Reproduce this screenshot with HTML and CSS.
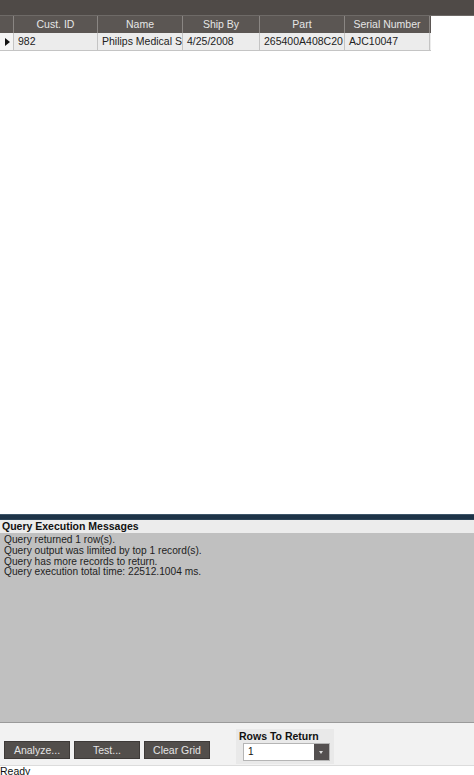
FILE: index.html
```html
<!DOCTYPE html>
<html>
<head>
<meta charset="utf-8">
<link rel="stylesheet" href="styles.css">
</head>
<body>
<div class="app">
  <div class="grid-area">
    <div class="topbar"></div>
    <div class="grid">
      <div class="row head">
        <div class="cell sel"></div>
        <div class="cell c1">Cust. ID</div>
        <div class="cell c2">Name</div>
        <div class="cell c3">Ship By</div>
        <div class="cell c4">Part</div>
        <div class="cell c5">Serial Number</div>
      </div>
      <div class="row data">
        <div class="cell sel"><span class="arrow"></span></div>
        <div class="cell c1">982</div>
        <div class="cell c2">Philips Medical S</div>
        <div class="cell c3">4/25/2008</div>
        <div class="cell c4">265400A408C20</div>
        <div class="cell c5">AJC10047</div>
      </div>
    </div>
  </div>
  <div class="splitter"></div>
  <div class="messages">
    <div class="msg-title">Query Execution Messages</div>
    <div class="msg-body">
      <div>Query returned 1 row(s).</div>
      <div>Query output was limited by top 1 record(s).</div>
      <div>Query has more records to return.</div>
      <div>Query execution total time: 22512.1004 ms.</div>
    </div>
  </div>
  <div class="toolbar">
    <div class="buttons">
      <button class="btn">Analyze...</button>
      <button class="btn">Test...</button>
      <button class="btn">Clear Grid</button>
    </div>
    <div class="rows-group">
      <div class="rows-label">Rows To Return</div>
      <div class="select">
        <span class="select-value">1</span>
        <span class="select-arrow"></span>
      </div>
    </div>
  </div>
  <div class="status">Ready</div>
</div>
</body>
</html>
```
FILE: styles.css
```css
* { box-sizing: border-box; }
html, body { margin: 0; padding: 0; background: #ffffff; }
body {
  font-family: "Liberation Sans", Arial, sans-serif;
  font-size: 10px;
  color: #1a1a1a;
  width: 474px;
  height: 775px;
  overflow: hidden;
}
.app { display: flex; flex-direction: column; height: 775px; }
.grid-area { height: 515px; background: #ffffff; }
.topbar { height: 16px; background: #4f4a47; border-bottom: 1px solid #6e6a67; }
.grid { width: 431px; }
.row { display: flex; }
.cell {
  border-right: 1px solid #bdbdbd;
  padding: 0 4px;
  white-space: nowrap;
  overflow: hidden;
}
.sel { width: 14px; padding: 0; }
.c1 { width: 84px; }
.c2 { width: 85px; }
.c3 { width: 77px; }
.c4 { width: 85px; }
.c5 { width: 85px; }
.head { height: 17px; background: #5b5653; }
.head .cell {
  color: #e6e6e6;
  text-align: center;
  line-height: 17px;
  font-size: 10.5px;
  border-right: 1px solid #8a8683;
}
.head .sel { border-right: 1px solid #8a8683; }
.data { height: 18px; background: #ececec; border-bottom: 1px solid #c4c4c4; }
.data .cell { line-height: 16px; color: #222; border-right: 1px solid #c4c4c4; font-size: 10.5px; }
.data .sel { display: flex; align-items: center; justify-content: center; background: #f4f4f4; }
.arrow {
  width: 0; height: 0;
  border-top: 4px solid transparent;
  border-bottom: 4px solid transparent;
  border-left: 5px solid #111;
  margin-left: 1px;
}
.splitter {
  height: 6px;
  background: #1d3347;
  border-top: 1px solid #3d5569;
  border-bottom: 1px solid #2b4256;
}
.messages { height: 203px; display: flex; flex-direction: column; }
.msg-title {
  height: 13px;
  background: #ececec;
  font-weight: bold;
  font-size: 10.5px;
  line-height: 13px;
  padding-left: 2px;
  color: #111;
}
.msg-body {
  flex: 1;
  background: #c0c0c0;
  padding: 2px 4px;
  line-height: 10.6px;
  font-size: 10.2px;
  color: #1e1e1e;
  border-bottom: 1px solid #9a9a9a;
}
.toolbar {
  height: 42px;
  background: #f2f2f2;
  display: flex;
  align-items: flex-start;
  padding-left: 4px;
}
.buttons { display: flex; gap: 4px; margin-top: 18px; }
.btn {
  width: 66px;
  height: 18px;
  background: #524e4b;
  color: #e4e4e4;
  border: 1px solid #3e3a38;
  font-family: "Liberation Sans", Arial, sans-serif;
  font-size: 10.5px;
  padding: 0;
  line-height: 16px;
}
.rows-group {
  margin-left: 26px;
  margin-top: 6px;
  width: 98px;
  height: 35px;
  background: #e9e9e9;
  padding: 1px 3px 0 3px;
}
.rows-label { font-weight: bold; color: #111; line-height: 12px; font-size: 10.5px; }
.select {
  margin-top: 1px;
  margin-left: 4px;
  width: 87px;
  height: 18px;
  display: flex;
  background: #ffffff;
  border: 1px solid #b5b5b5;
}
.select-value { flex: 1; padding-left: 4px; line-height: 16px; color: #111; }
.select-arrow {
  width: 15px;
  background: #545050;
  position: relative;
}
.select-arrow::after {
  content: "";
  position: absolute;
  left: 5px; top: 7px;
  border-left: 2px solid transparent;
  border-right: 2px solid transparent;
  border-top: 3px solid #ddd;
}
.status {
  height: 10px;
  background: #ffffff;
  border-top: 1px solid #dcdcdc;
  line-height: 11px;
  font-size: 10.5px;
  overflow: visible;
  color: #111;
}
```
